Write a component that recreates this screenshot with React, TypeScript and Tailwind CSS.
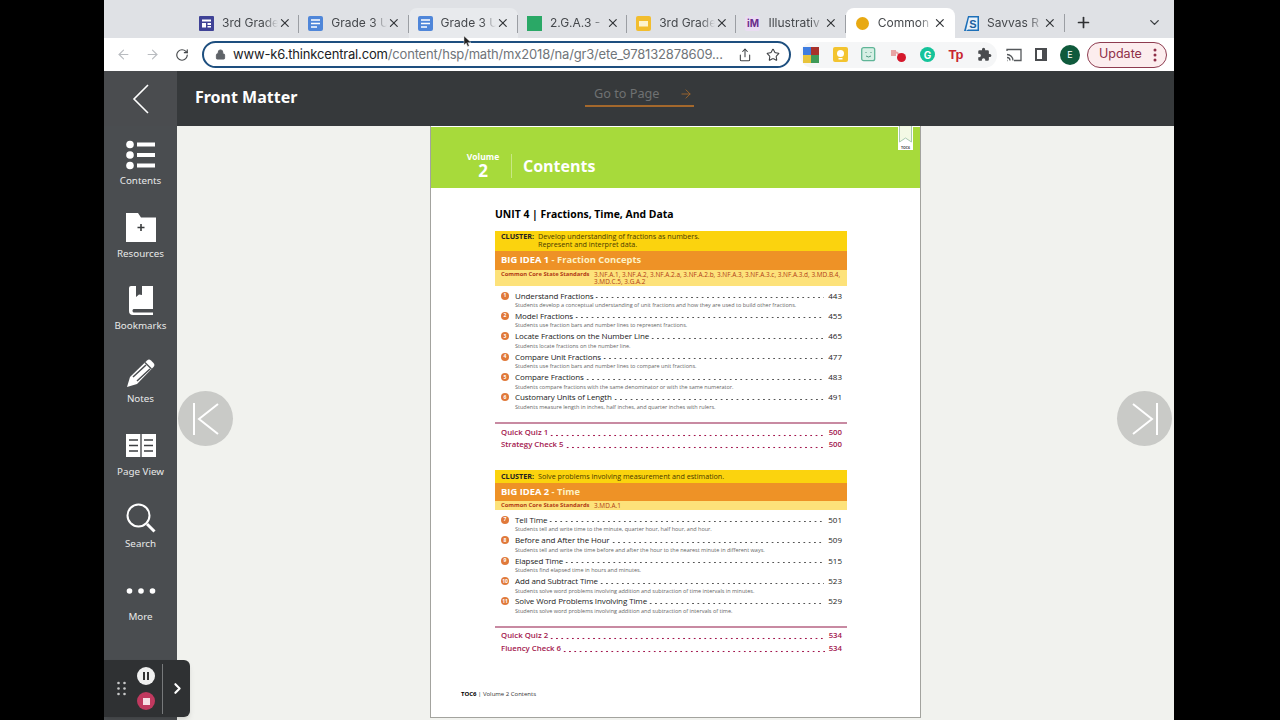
import React from 'react';
import { ArrowLeft, ArrowRight, ChevronDown, ChevronRight, Lock, Plus, RotateCw, Share, Star, X } from 'lucide-react';

const DocIcon = () => (
    <svg width="15" height="15" viewBox="0 0 15 15">
        <rect width="15" height="15" rx="2" fill="#4f86d9" />
        <path d="M3 4h9M3 7.5h9M3 11h6" stroke="#fff" strokeWidth="1.4" />
    </svg>
);

const FormIcon = () => (
    <svg width="15" height="15" viewBox="0 0 15 15">
        <rect width="15" height="15" rx="1" fill="#3f4296" />
        <path d="M3 3.500h9v2H3zM3 7h4v4.500H3zM8.500 7H12v2H8.500zM8.500 10H12v1.500H8.500z" fill="#fff" />
    </svg>
);

const SlideIcon = () => (
    <svg width="15" height="15" viewBox="0 0 15 15">
        <rect width="15" height="15" rx="2" fill="#f2bd2e" />
        <rect x="3" y="5" width="9" height="5.5" fill="#fdf3cf" />
    </svg>
);

const SavvasIcon = () => (
    <svg width="15" height="15" viewBox="0 0 15 15">
        <path d="M0 15L4 0h11v15z" fill="#1c6fb8" />
        <path d="M1.800 15L5 1.500h8.500V13.500H4z" fill="#e9f2fa" />
        <text x="9" y="12" textAnchor="middle" fontSize="11" fontWeight="700" fill="#1c5f9f" fontFamily="Liberation Sans, sans-serif">
            S
        </text>
    </svg>
);

const tabs = [
    { title: '3rd Grade', icon: <FormIcon /> },
    { title: 'Grade 3 U', icon: <DocIcon />, },
    { title: 'Grade 3 U', icon: <DocIcon />, hover: true },
    { title: '2.G.A.3 -', icon: <span className="block w-[15px] h-[15px] bg-[#2aa866]" /> },
    { title: '3rd Grade', icon: <SlideIcon /> },
    {
        title: 'Illustrativ',
        icon: (
            <span className="flex w-[15px] h-[15px] items-center justify-center rounded-[2px] bg-[#eadcf2] text-[10px] leading-none font-bold text-[#6b2a8c]">
                iM
            </span>
        ),
    },
    { title: 'Common', icon: <span className="block w-[13px] h-[13px] rounded-full bg-[#e8a912]" />, active: true },
    { title: 'Savvas R', icon: <SavvasIcon /> },
];

const Tab = ({ tab, last }: { tab: (typeof tabs)[number]; last: boolean }) => (
    <div
        className={`relative flex h-[30px] w-[109.300px] shrink-0 items-center pl-[9px] pr-[8px] rounded-t-lg ${
            tab.active ? 'bg-white' : tab.hover ? 'bg-[#e8eaed]' : ''
        }`}
    >
        <span className="w-[15px] flex justify-center shrink-0">{tab.icon}</span>
        <span className="ml-[8px] w-[57px] overflow-hidden whitespace-nowrap text-[12px] text-[#45484c] [mask-image:linear-gradient(to_right,black_75%,transparent_100%)]">
            {tab.title}
        </span>
        <X size={14} strokeWidth={2} className="ml-auto text-[#303336]" />
        {!tab.active && !last && <span className="absolute right-0 top-[7px] h-[18px] w-px bg-[#9b9ea3]" />}
    </div>
);

const Extensions = () => (
    <div className="ml-[9px] flex h-[26px] w-[197px] items-center justify-between rounded-full bg-[#f5f6f7] pl-[3px] pr-[5px]">
        <svg width="16" height="16" viewBox="0 0 16 16">
            <rect x="0" y="0" width="8" height="8" fill="#3f7de0" />
            <rect x="8" y="0" width="8" height="8" fill="#a8322c" />
            <rect x="0" y="8" width="8" height="8" fill="#e8c43c" />
            <rect x="8" y="8" width="8" height="8" fill="#3f9a58" />
        </svg>
        <svg width="15" height="15" viewBox="0 0 15 15">
            <rect width="15" height="15" rx="2" fill="#f3c430" />
            <circle cx="7.5" cy="6.5" r="3.5" fill="#fff" />
            <rect x="5.5" y="11" width="4" height="1.5" fill="#fff" />
        </svg>
        <svg width="15" height="16" viewBox="0 0 15 16">
            <rect x=".7" y=".7" width="13" height="13" rx="2" fill="#d6efe4" stroke="#5fb597" strokeWidth="1.3" />
            <path d="M5 5v1M10 5v1M5 9q2.500 2 5 0" stroke="#4b9a80" fill="none" />
        </svg>
        <svg width="17" height="16" viewBox="0 0 17 16">
            <rect x="1" y="3" width="5" height="6" fill="#e8a5a5" />
            <path d="M6 5l4 3" stroke="#e8a5a5" strokeWidth="2" />
            <circle cx="11.500" cy="10.500" r="4.500" fill="#d5182c" />
        </svg>
        <span className="flex h-[15px] w-[15px] items-center justify-center rounded-full bg-[#15c39a] text-[10px] font-bold leading-none text-white">
            G
        </span>
        <span className="w-[15px] text-[13px] font-bold leading-none text-[#c8262f] font-['Liberation_Sans',sans-serif] tracking-[-1px]">
            Tp
        </span>
        <svg width="15" height="15" viewBox="0 0 24 24" fill="#4a4c4f">
            <path d="M20.500 11H19V7a2 2 0 0 0-2-2h-4V3.500a2.500 2.500 0 0 0-5 0V5H4a2 2 0 0 0-2 2v3.800h1.500a2.700 2.700 0 0 1 0 5.400H2V20a2 2 0 0 0 2 2h3.800v-1.500a2.700 2.700 0 0 1 5.400 0V22H17a2 2 0 0 0 2-2v-4h1.500a2.500 2.500 0 0 0 0-5z" />
        </svg>
    </div>
);

const BrowserChrome = () => (
    <div className="font-['Inter',sans-serif]">
        <div className="relative flex h-[38px] items-end bg-[#dfe1e5] pl-[86px]">
            {tabs.map((t, i) => (
                <Tab key={i} tab={t} last={i === tabs.length - 1} />
            ))}
            <span className="ml-[0px] h-[18px] w-px self-center mt-[8px] bg-[#9b9ea3]" />
            <Plus size={17} strokeWidth={2.4} className="ml-[10px] mb-[7px] text-[#2e3033]" />
            <ChevronDown size={15} strokeWidth={2.2} className="ml-[55px] mb-[8px] text-[#3c3f42]" />
        </div>
        <div className="flex h-[33px] items-center bg-white pl-[12px] pr-[7px]">
            <ArrowLeft size={15} strokeWidth={1.8} className="text-[#b9bcc0]" />
            <ArrowRight size={15} strokeWidth={1.8} className="ml-[14px] text-[#b9bcc0]" />
            <RotateCw size={14} strokeWidth={2} className="ml-[15px] text-[#45484b]" />
            <div className="ml-[13px] flex h-[27px] w-[589px] items-center rounded-full border-2 border-[#1e4f7f] pl-[11px] pr-[9px]">
                <Lock size={11} fill="#5f6368" strokeWidth={2} className="shrink-0 text-[#5f6368]" />
                <span className="ml-[7px] whitespace-nowrap text-[13px] tracking-[-0.170px] text-[#70757a]">
                    <span className="text-[#202124]">www-k6.thinkcentral.com</span>
                    /content/hsp/math/mx2018/na/gr3/ete_978132878609...
                </span>
                <Share size={14} strokeWidth={1.8} className="ml-auto text-[#3f4245]" />
                <Star size={14} strokeWidth={1.8} className="ml-[14px] text-[#3f4245]" />
            </div>
            <Extensions />
            <svg width="16" height="14" viewBox="0 0 16 14" fill="none" stroke="#55585b" strokeWidth="1.300" className="ml-[9px]">
                <path d="M1 3V1.500h14v11H8M1 12.500h.5M1 9.500a3 3 0 0 1 3 3M1 6.500a6 6 0 0 1 6 6" />
            </svg>
            <span className="ml-[13px] h-[13px] w-[12px] border-2 border-[#4a4c4f] border-r-[5px]" />
            <span className="ml-[13px] flex h-[20px] w-[20px] items-center justify-center rounded-full bg-[#0f5a3c] text-[9px] text-white">
                E
            </span>
            <div className="ml-[7px] flex h-[26px] w-[80px] items-center rounded-full border border-[#8e3c50] bg-[#fcedee] pl-[11px] pr-[9px]">
                <span className="text-[12.500px] text-[#8e2f48]">Update</span>
                <svg width="4" height="14" viewBox="0 0 4 14" fill="#8e2f48" className="ml-auto">
                    <circle cx="2" cy="2" r="1.500" />
                    <circle cx="2" cy="7" r="1.500" />
                    <circle cx="2" cy="12" r="1.500" />
                </svg>
            </div>
        </div>
    </div>
);

const sideItems = [
    {
        label: 'Contents',
        icon: (
            <svg width="30" height="30" viewBox="0 0 30 30" fill="#fff">
                <circle cx="4" cy="4.500" r="3.800" />
                <circle cx="4" cy="15" r="3.800" />
                <circle cx="4" cy="25.500" r="3.800" />
                <rect x="11" y="2.500" width="18" height="4" />
                <rect x="11" y="13" width="18" height="4" />
                <rect x="11" y="23.500" width="18" height="4" />
            </svg>
        ),
    },
    {
        label: 'Resources',
        icon: (
            <svg width="30" height="29" viewBox="0 0 30 29">
                <path d="M0 0h12l3 4.500h15V29H0z" fill="#fff" />
                <path d="M15 11v7M11.500 14.500h7" stroke="#3a3c3e" strokeWidth="1.600" />
            </svg>
        ),
    },
    {
        label: 'Bookmarks',
        icon: (
            <svg width="24" height="29" viewBox="0 0 24 29">
                <path d="M2 0h5v11l3-2.500 3 .5V0h11v23H4.500a2 2 0 0 0 0 3.500H24V29H4a4 4 0 0 1-4-4V2a2 2 0 0 1 2-2z" fill="#fff" />
            </svg>
        ),
    },
    {
        label: 'Notes',
        icon: (
            <svg width="28" height="29" viewBox="0 0 28 29">
                <path d="M0 28l3-10L20 1.500a3 3 0 0 1 4 0l2.500 2.500a3 3 0 0 1 0 4L10 25z" fill="#fff" />
                <path d="M6 18L19 6M10 22L23 10" stroke="#4a4d50" strokeWidth="1.500" />
                <path d="M18 3.500l6.500 6.500" stroke="#4a4d50" strokeWidth="1.200" />
            </svg>
        ),
    },
    {
        label: 'Page View',
        icon: (
            <svg width="30" height="23" viewBox="0 0 30 23">
                <rect width="30" height="23" fill="#fff" />
                <path d="M15 0v23M3 6h9M3 11.500h9M3 17h9M18 6h9M18 11.500h9M18 17h9" stroke="#3d3f42" strokeWidth="1.300" />
            </svg>
        ),
    },
    {
        label: 'Search',
        icon: (
            <svg width="30" height="30" viewBox="0 0 30 30" fill="none" stroke="#fff">
                <circle cx="12.500" cy="12.500" r="11" strokeWidth="2" />
                <path d="M21 21l7.500 7.500" strokeWidth="3" />
            </svg>
        ),
    },
    {
        label: 'More',
        icon: (
            <svg width="30" height="6" viewBox="0 0 30 6" fill="#fff">
                <circle cx="3.500" cy="3" r="2.800" />
                <circle cx="15" cy="3" r="2.800" />
                <circle cx="26.500" cy="3" r="2.800" />
            </svg>
        ),
    },
];

const Sidebar = () => (
    <aside className="flex w-[73px] shrink-0 flex-col bg-[#4a4d50] pt-[10px] font-['Noto_Sans',sans-serif]">
        {sideItems.map((item) => (
            <div key={item.label} className="flex h-[72.700px] shrink-0 flex-col items-center">
                <div className="flex h-[38px] items-center justify-center">{item.icon}</div>
                <span className="text-[9.800px] leading-[14px] text-[#e8e9e9]">{item.label}</span>
            </div>
        ))}
    </aside>
);

const Leader = ({ bold }: { bold?: boolean }) => (
    <span
        className={`mx-[1px] mb-[2px] h-[3px] min-w-0 flex-1 self-end bg-repeat-x bg-[size:5.300px_3px] ${
            bold
                ? 'bg-[radial-gradient(circle,#a3164e_0.800px,transparent_1.100px)]'
                : 'bg-[radial-gradient(circle,#555555_0.650px,transparent_1px)]'
        }`}
    />
);

const Lesson = ({ n, title, desc, page }: { n: number; title: string; desc: string; page: number }) => (
    <div className="h-[20.400px]">
        <div className="flex h-[11px] items-center">
            <span className="flex h-[8px] w-[8px] shrink-0 items-center justify-center rounded-full bg-[#e0793a] text-[5px] font-bold leading-none text-white">
                {n}
            </span>
            <span className="ml-[6px] whitespace-nowrap text-[8px] tracking-[-0.100px] text-[#222]">{title}</span>
            <Leader />
            <span className="ml-[3px] w-[14px] text-right text-[8px] text-[#222]">{page}</span>
        </div>
        <div className="ml-[14px] mt-[1px] whitespace-nowrap text-[5.500px] leading-[7px] text-[#666]">{desc}</div>
    </div>
);

const CheckRow = ({ title, page }: { title: string; page: number }) => (
    <div className="flex h-[12.500px] items-center">
        <span className="whitespace-nowrap text-[7.800px] font-semibold text-[#a3164e]">{title}</span>
        <Leader bold />
        <span className="ml-[3px] text-[7.800px] font-semibold text-[#a3164e]">{page}</span>
    </div>
);

const Banner = ({ cluster, idea, topic, standards, tall }: { cluster: string[]; idea: string; topic: string; standards: string[]; tall?: boolean }) => (
    <div>
        <div className={`flex bg-[#fbd30e] px-[6px] text-[7.200px] leading-[7.500px] text-[#4a3a00] ${tall ? 'h-[20px] pt-[2px]' : 'h-[13px] items-center'}`}>
            <span className="w-[37px] shrink-0 whitespace-nowrap font-bold text-[#222]">CLUSTER:</span>
            <div className="whitespace-nowrap">
                {cluster.map((c) => (
                    <div key={c}>{c}</div>
                ))}
            </div>
        </div>
        <div className={`flex items-center bg-[#ee9226] px-[6px] text-[9.400px] font-bold ${tall ? 'h-[19px]' : 'h-[18px]'}`}>
            <span className="text-white">{idea}</span>
            <span className="text-[#fdf1c4]">&nbsp;- {topic}</span>
        </div>
        <div className={`flex bg-[#fde27a] px-[6px] text-[5.800px] leading-[7.500px] text-[#b13a16] ${tall ? 'h-[16px] pt-[0.500px]' : 'h-[9px] items-center'}`}>
            <span className="w-[93px] shrink-0 whitespace-nowrap font-bold">Common Core State Standards</span>
            <div className="text-[6.450px]">
                {standards.map((s) => (
                    <div key={s} className="whitespace-nowrap">{s}</div>
                ))}
            </div>
        </div>
    </div>
);

const PageSheet = () => (
    <div className="flex h-[592px] w-[491px] flex-col border-x border-b border-[#a3a39e] bg-white font-['Open_Sans',sans-serif]">
        <div className="relative mt-[1px] flex h-[61px] items-center bg-[#a7da3b] pl-[35px] pt-[17px] text-white">
            <div className="flex w-[34px] flex-col items-center font-bold leading-none">
                <span className="text-[8.500px]">Volume</span>
                <span className="text-[17px]">2</span>
            </div>
            <span className="ml-[11px] h-[24px] w-px bg-[#c9e884]" />
            <span className="ml-[11px] text-[16px] font-bold">Contents</span>
            <div className="absolute right-[7px] top-[-1px] flex h-[24px] w-[15px] flex-col items-center justify-end bg-white">
                <svg width="13" height="17" viewBox="0 0 13 17" className="absolute top-0">
                    <path d="M.5 0v16L6.500 12l6 4V0" fill="#f3f9e5" stroke="#a8c9b0" />
                </svg>
                <span className="text-[3.500px] font-bold leading-[5px] text-[#444]">TOC6</span>
            </div>
        </div>
        <div className="pl-[64px] pr-[73px]">
            <h2 className="mt-[18px] h-[17px] text-[10.400px] font-bold leading-[17px] text-black">UNIT 4 | Fractions, Time, And Data</h2>
            <div className="mt-[8px]">
                <Banner
                    tall
                    cluster={['Develop understanding of fractions as numbers.', 'Represent and interpret data.']}
                    idea="BIG IDEA 1"
                    topic="Fraction Concepts"
                    standards={[
                        '3.NF.A.1, 3.NF.A.2, 3.NF.A.2.a, 3.NF.A.2.b, 3.NF.A.3, 3.NF.A.3.c, 3.NF.A.3.d, 3.MD.B.4,',
                        '3.MD.C.5, 3.G.A.2',
                    ]}
                />
            </div>
            <div className="mt-[4px] pl-[6px] pr-[5px]">
                <Lesson n={1} title="Understand Fractions" desc="Students develop a conceptual understanding of unit fractions and how they are used to build other fractions." page={443} />
                <Lesson n={2} title="Model Fractions" desc="Students use fraction bars and number lines to represent fractions." page={455} />
                <Lesson n={3} title="Locate Fractions on the Number Line" desc="Students locate fractions on the number line." page={465} />
                <Lesson n={4} title="Compare Unit Fractions" desc="Students use fraction bars and number lines to compare unit fractions." page={477} />
                <Lesson n={5} title="Compare Fractions" desc="Students compare fractions with the same denominator or with the same numerator." page={483} />
                <Lesson n={6} title="Customary Units of Length" desc="Students measure length in inches, half inches, and quarter inches with rulers." page={491} />
            </div>
            <div className="mt-[10px] border-t-2 border-[#c88aa2] pl-[6px] pr-[5px] pt-[2px]">
                <CheckRow title="Quick Quiz 1" page={500} />
                <CheckRow title="Strategy Check 5" page={500} />
            </div>
            <div className="mt-[19px]">
                <Banner
                    cluster={['Solve problems involving measurement and estimation.']}
                    idea="BIG IDEA 2"
                    topic="Time"
                    standards={['3.MD.A.1']}
                />
            </div>
            <div className="mt-[4px] pl-[6px] pr-[5px]">
                <Lesson n={7} title="Tell Time" desc="Students tell and write time to the minute, quarter hour, half hour, and hour." page={501} />
                <Lesson n={8} title="Before and After the Hour" desc="Students tell and write the time before and after the hour to the nearest minute in different ways." page={509} />
                <Lesson n={9} title="Elapsed Time" desc="Students find elapsed time in hours and minutes." page={515} />
                <Lesson n={10} title="Add and Subtract Time" desc="Students solve word problems involving addition and subtraction of time intervals in minutes." page={523} />
                <Lesson n={11} title="Solve Word Problems Involving Time" desc="Students solve word problems involving addition and subtraction of intervals of time." page={529} />
            </div>
            <div className="mt-[10px] border-t-2 border-[#c88aa2] pl-[6px] pr-[5px] pt-[1.500px]">
                <CheckRow title="Quick Quiz 2" page={534} />
                <CheckRow title="Fluency Check 6" page={534} />
            </div>
        </div>
        <div className="mt-[34px] pl-[30px] text-[6px] leading-[10px] text-[#333]">
            <span className="font-bold text-black">TOC6</span> | Volume 2 Contents
        </div>
    </div>
);

const PageArrow = ({ flip, className }: { flip?: boolean; className: string }) => (
    <div className={`absolute top-[391px] flex h-[55px] w-[55px] items-center justify-center rounded-full bg-[#c9cac7] ${className}`}>
        <svg width="28" height="32" viewBox="0 0 28 32" fill="none" stroke="#fff" strokeWidth="2" className={flip ? 'rotate-180' : ''}>
            <path d="M2 0v32M26 1L7 16l19 15" />
        </svg>
    </div>
);

const RecorderWidget = () => (
    <div className="absolute bottom-[3px] left-0 flex h-[57px] w-[86px] items-center rounded-r-md bg-[#2f3133] shadow-md">
        <svg width="9" height="15" viewBox="0 0 9 15" fill="#c7c8c8" className="ml-[13px]">
            <circle cx="1.500" cy="2" r="1.300" />
            <circle cx="7.500" cy="2" r="1.300" />
            <circle cx="1.500" cy="7.500" r="1.300" />
            <circle cx="7.500" cy="7.500" r="1.300" />
            <circle cx="1.500" cy="13" r="1.300" />
            <circle cx="7.500" cy="13" r="1.300" />
        </svg>
        <div className="ml-[11px] flex flex-col items-center gap-[7px]">
            <span className="flex h-[18px] w-[18px] items-center justify-center gap-[2px] rounded-full bg-[#f0f0f0]">
                <span className="h-[8px] w-[2px] bg-[#333]" />
                <span className="h-[8px] w-[2px] bg-[#333]" />
            </span>
            <span className="flex h-[18px] w-[18px] items-center justify-center rounded-full bg-[#c0395f]">
                <span className="h-[7px] w-[7px] bg-[#f6dfe5]" />
            </span>
        </div>
        <span className="ml-[7px] h-[50px] w-px bg-[#77797b]" />
        <ChevronRight size={17} strokeWidth={3} className="ml-[6px] text-white" />
    </div>
);

const Cursor = () => (
    <svg width="9" height="13" viewBox="0 0 9 13" className="absolute left-[359px] top-[35px]">
        <path d="M1 1v9l2.200-2 1.500 3.500 1.500-.7L4.800 7.500H8z" fill="#222" stroke="#ddd" strokeWidth=".5" />
    </svg>
);

export default function App() {
    return (
        <div className="flex h-[720px] w-[1280px] overflow-hidden bg-black">
            <div className="relative ml-[104px] flex h-full w-[1070px] flex-col bg-[#f1f2ee]">
                <BrowserChrome />
                <div className="flex h-[55px] shrink-0 bg-[#36393b]">
                    <div className="flex w-[73px] items-center justify-center bg-[#4a4c4f]">
                        <svg width="18" height="30" viewBox="0 0 18 30" fill="none" stroke="#fff" strokeWidth="1.600">
                            <path d="M16 1L2 15l14 14" />
                        </svg>
                    </div>
                    <h1 className="ml-[18px] mb-[4px] w-[110px] self-center whitespace-nowrap font-['Noto_Sans',sans-serif] text-[16px] font-bold leading-[22px] text-white">Front Matter</h1>
                    <div className="ml-[280px] mt-[11px] flex h-[25px] w-[109px] items-center border-b-2 border-[#a4682c] pl-[9px] font-['Noto_Sans',sans-serif] text-[12.700px] text-[#6f7172]">
                        Go to Page
                        <ArrowRight size={14} strokeWidth={1.500} className="ml-auto mr-[1px] text-[#a4682c]" />
                    </div>
                </div>
                <div className="flex min-h-0 flex-1">
                    <Sidebar />
                    <div className="ml-[253px]">
                        <PageSheet />
                    </div>
                </div>
                <PageArrow className="left-[74px]" />
                <PageArrow flip className="right-[2px]" />
                <RecorderWidget />
                <Cursor />
            </div>
        </div>
    );
}
